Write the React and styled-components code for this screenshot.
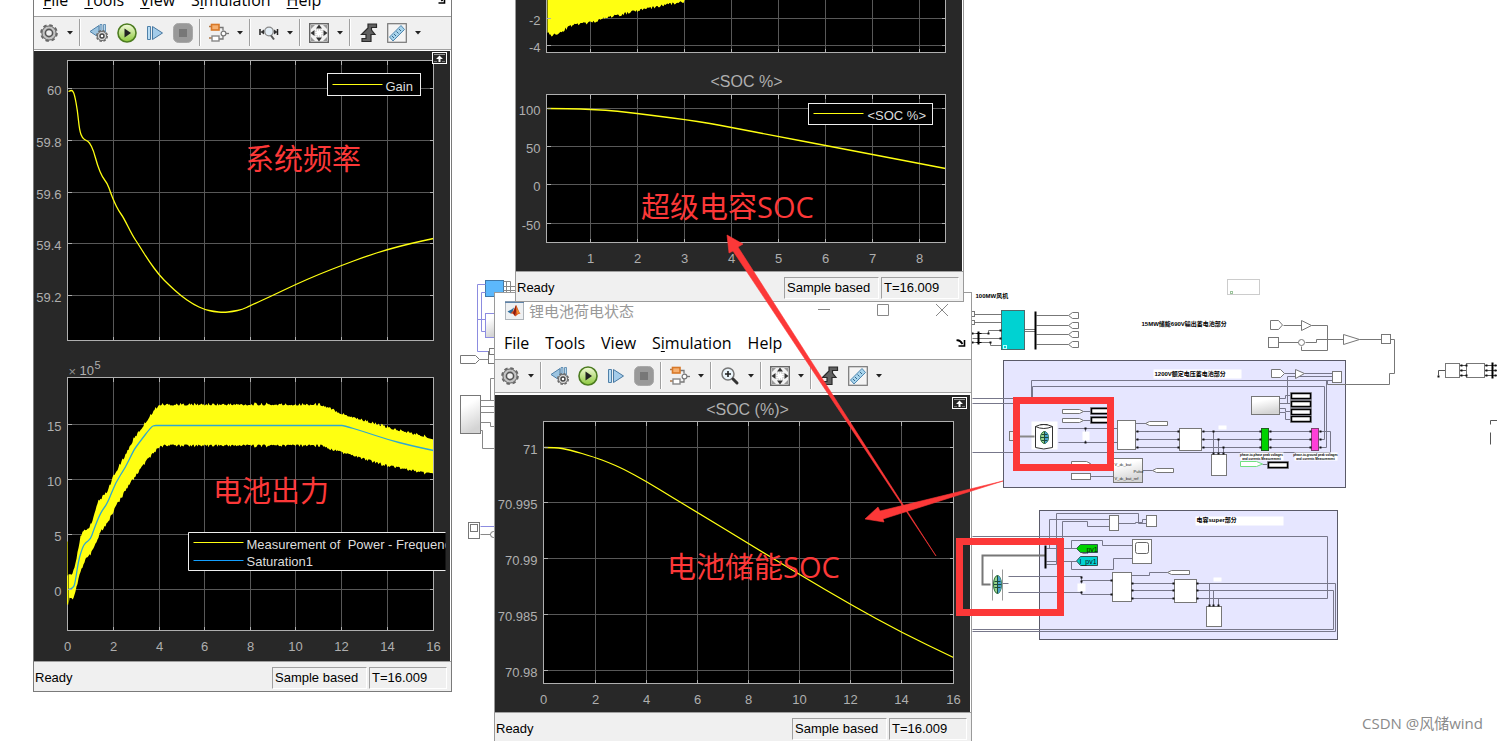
import React from "react";
import styled, { createGlobalStyle } from "styled-components";

const GlobalStyle = createGlobalStyle`
  * {
    box-sizing: border-box;
  }

  body {
    margin: 0;
    background: #fff;
    overflow: hidden;
  }
`;

const Desktop = styled.main`
  position: relative;
  width: 100%;
  height: 100vh;
  overflow: hidden;
  font-family: "Liberation Sans", "Noto Sans CJK SC", sans-serif;
`;

const Canvas = styled.svg`
  position: absolute;
  top: 0;
  left: 0;
  pointer-events: none;
`;

const Window = styled.section`
  position: absolute;
  left: ${(p) => p.$x}px;
  top: ${(p) => p.$y}px;
  width: ${(p) => p.$w}px;
  display: flex;
  flex-direction: column;
  background: #fff;
  border: 1px solid ${(p) => p.$edge || "#9a9a9a"};
`;

const TitleBar = styled.header`
  display: flex;
  align-items: center;
  height: 34px;
  padding-left: 10px;
  color: #999;
  font-size: 15px;
`;

const TitleText = styled.span`
  flex: 1;
  margin-left: 5px;
`;

const CaptionButton = styled.button`
  width: 59px;
  height: 30px;
  padding: 0;
  border: none;
  background: none;
  display: flex;
  align-items: center;
  justify-content: center;
`;

const MenuBar = styled.nav`
  display: flex;
  align-items: center;
  gap: 16px;
  height: 32px;
  padding: 0 5px 0 9px;
`;

const MenuItem = styled.button`
  border: none;
  padding: 0;
  background: none;
  color: #000;
  font-family: "Open Sans", "Noto Sans", sans-serif;
  font-size: 16px;
  line-height: 22px;

  u {
    text-underline-offset: 2px;
  }
`;

const DockButton = styled(MenuItem)`
  display: flex;
  margin-left: auto;
`;

const Toolbar = styled.div`
  display: flex;
  align-items: center;
  height: 34px;
  margin-bottom: ${(p) => p.$gap}px;
  padding-left: 1px;
  padding-bottom: 1px;
  background: #f0f0f0;
  border-top: 1px solid #a0a0a0;
  border-bottom: 1px solid #a0a0a0;
`;

const ToolButton = styled.button`
  display: flex;
  align-items: center;
  justify-content: center;
  width: ${(p) => (p.$narrow ? 14 : 28)}px;
  height: 28px;
  padding: 0;
  border: none;
  background: none;
`;

const Separator = styled.span`
  width: 2px;
  height: 27px;
  margin: 0 4px 0 2px;
  border-left: 1px solid #a0a0a0;
  border-right: 1px solid #fff;
`;

const Scope = styled.svg`
  display: block;
  margin-right: 1px;
  background: #282828;
  font-size: 13px;

  text {
    white-space: pre;
  }
`;

const StatusBar = styled.footer`
  display: flex;
  align-items: center;
  gap: 2px;
  height: 30px;
  padding: 4px 4px 2px 1px;
  background: #f0f0f0;
  border-top: 1px solid #a0a0a0;
  color: #000;
  font-size: 13px;
`;

const StatusText = styled.span`
  flex: 1;
`;

const StatusCell = styled.span`
  width: ${(p) => p.$w}px;
  height: 22px;
  padding-left: 2px;
  line-height: 20px;
  border: 1px solid;
  border-color: #a0a0a0 #fff #fff #a0a0a0;
`;

const Note = styled.span`
  position: absolute;
  left: ${(p) => p.$x}px;
  top: ${(p) => p.$y}px;
  color: #fc3838;
  font-family: "Open Sans", "Noto Sans CJK SC", sans-serif;
  font-size: 29px;
  line-height: 40px;
  white-space: nowrap;
`;

const Watermark = styled.span`
  position: absolute;
  right: 14px;
  bottom: 6px;
  color: #8a8a8a;
  font-family: "Open Sans", "Noto Sans CJK SC", sans-serif;
  font-size: 15px;
  line-height: 24px;
`;

// quadratic smoothing through the midpoints, so the curve never overshoots
const smooth = (pts) => {
  let d = `M${pts[0]}`;
  for (let i = 1; i < pts.length - 1; i++) {
    const [x, y] = pts[i];
    const [nx, ny] = pts[i + 1];
    d += ` Q${x},${y} ${(x + nx) / 2},${(y + ny) / 2}`;
  }
  return `${d} L${pts[pts.length - 1]}`;
};

// resample an edge at every pixel with a bit of fixed noise
const noisy = (pts, dir, amp = 3) => {
  const out = [];
  for (let i = 0; i < pts.length - 1; i++) {
    const [x1, y1] = pts[i];
    const [x2, y2] = pts[i + 1];
    for (let x = x1; x < x2; x += 1) {
      const n = Math.abs(Math.sin(x * 12.9898) * 43758.5453) % 1;
      out.push([x, y1 + ((y2 - y1) * (x - x1)) / (x2 - x1) + dir * n * n * amp]);
    }
  }
  out.push(pts[pts.length - 1]);
  return out;
};

function Axes({ x, y, w, h, xTicks = [], yTicks = [], labelX, labelY, children }) {
  return (
    <g>
      <rect x={x} y={y} width={w} height={h} fill="#000" />
      <g stroke="#585858" shapeRendering="crispEdges">
        {xTicks.map(([px]) => (
          <line key={px} x1={px} x2={px} y1={y} y2={y + h} />
        ))}
        {yTicks.map(([py]) => (
          <line key={py} x1={x} x2={x + w} y1={py} y2={py} />
        ))}
      </g>
      {children}
      <g stroke="#afafaf" shapeRendering="crispEdges">
        <rect x={x} y={y} width={w} height={h} fill="none" />
        {xTicks.map(([px]) => (
          <path key={px} d={`M${px},${y}v4M${px},${y + h}v-4`} />
        ))}
        {yTicks.map(([py]) => (
          <path key={py} d={`M${x},${py}h4M${x + w},${py}h-4`} />
        ))}
      </g>
      <g fill="#afafaf">
        {labelY &&
          xTicks.map(([px, t]) => (
            <text key={px} x={px} y={labelY} textAnchor="middle">
              {t}
            </text>
          ))}
        {yTicks.map(([py, t]) => (
          <text key={py} x={labelX} y={py + 6} textAnchor="end">
            {t}
          </text>
        ))}
      </g>
    </g>
  );
}

function MaximizeMark({ x, y }) {
  return (
    <g transform={`translate(${x} ${y})`}>
      <rect x="0.5" y="0.5" width="14" height="11" fill="#282828" stroke="#fff" />
      <path d="M2 2.5h11" stroke="#999" />
      <path d="M7.5 3.5l3.500 3.500h-2.500v3h-2v-3h-2.500z" fill="#fff" />
      <path d="M2 9.500h3M10 9.500h3" stroke="#777" />
    </g>
  );
}

const GAIN = [
  [68, 91], [70, 90], [72, 90], [74, 94], [77, 110], [79, 130], [82, 138], [86, 140], [89, 142],
  [93, 150], [97, 165], [102, 177], [107, 183], [110, 192], [114, 202], [118, 210], [123, 217],
  [132, 235], [138, 244], [148, 260], [159, 275], [168, 284], [180, 295], [193, 304], [204, 309],
  [213, 311], [223, 312], [232, 311], [242, 309], [250, 305], [270, 296], [295, 284], [318, 274],
  [341, 265], [365, 256], [387, 249], [410, 243], [433, 238],
];

const POWER_TOP = [
  [68, 575], [72, 575], [74, 569], [77, 553], [80, 537], [83, 532], [88, 529], [92, 521], [98, 502],
  [107, 492], [113, 477], [123, 459], [133, 440], [147, 420], [155, 409], [160, 405], [320, 405],
  [341, 414], [387, 428], [433, 439],
];

const POWER_BOTTOM = [
  [68, 604], [69, 596], [72, 597], [75, 590], [80, 570], [85, 557], [90, 553], [93, 546], [100, 530],
  [107, 521], [115, 505], [130, 481], [147, 458], [158, 446], [163, 444], [320, 444], [341, 451],
  [387, 464], [433, 473],
];

const SATURATION = [
  [68, 589], [73, 588], [75, 580], [78, 560], [82, 547], [85, 542], [90, 539], [93, 530], [100, 512],
  [107, 503], [115, 482], [125, 467], [133, 450], [138, 443], [151, 426], [154, 425], [157, 425],
  [340, 425], [343, 425], [363, 431], [387, 439], [410, 445], [433, 450],
];

const CURRENT = [
  [547, 31], [550, 33], [558, 33], [565, 27], [573, 23], [590, 21], [610, 15], [637, 9], [660, 4],
  [684, 0],
];

const CAP_SOC = [
  [547, 108], [570, 108], [590, 109], [610, 110], [637, 113], [660, 116], [684, 119], [710, 123],
  [731, 127], [778, 136], [825, 145], [872, 154], [919, 163], [945, 168],
];

const BAT_SOC = [
  [544, 447], [555, 447], [568, 449], [595, 457], [608, 462], [622, 468], [646, 481], [672, 497],
  [697, 512], [748, 543], [799, 574], [850, 604], [901, 632], [953, 657],
];

const TICKS_16 = [
  [67, 0], [113, 2], [159, 4], [204, 6], [250, 8], [295, 10], [341, 12], [387, 14], [433, 16],
];

const points = (list) => list.map((p) => p.join(",")).join(" ");

function FrequencyScope() {
  return (
    <Scope width="416" height="610" viewBox="33.5 50.5 416 610" role="img" aria-label="Frequency and power">
      <Axes
        x={67}
        y={60}
        w={366}
        h={280}
        xTicks={TICKS_16}
        yTicks={[[88, "60"], [140, "59.8"], [192, "59.6"], [243, "59.4"], [295, "59.2"]]}
        labelX={61}
      >
        <path d={smooth(GAIN)} fill="none" stroke="#ffff11" strokeWidth="1.3" />
      </Axes>
      <rect x="327" y="73" width="93" height="22" fill="#000" stroke="#eee" />
      <line x1="332" x2="382" y1="84" y2="84" stroke="#ffff11" />
      <text x="385" y="90" fill="#ddd">Gain</text>
      <MaximizeMark x={431.5} y={51.5} />

      <Axes
        x={67}
        y={377}
        w={366}
        h={253}
        xTicks={TICKS_16}
        yTicks={[[424, "15"], [479, "10"], [534, "5"], [589, "0"]]}
        labelX={61}
        labelY={650}
      >
        <polygon
          points={points([...noisy(POWER_TOP, -1), ...noisy(POWER_BOTTOM, 1).reverse()])}
          fill="#ffff11"
        />
        <path d={smooth(SATURATION)} fill="none" stroke="#30a8d0" strokeWidth="1.3" />
      </Axes>
      <line x1="67" x2="67" y1="541" y2="575" stroke="#a0a010" />
      <line x1="67" x2="67" y1="575" y2="604" stroke="#ffff11" />
      <g fill="#afafaf">
        <text x="68" y="375" fill="#8f8f8f">×</text>
        <text x="79" y="374">10</text>
        <text x="94" y="368" fontSize="11">5</text>
      </g>
      <path d="M445 532H188V570H445" fill="#000" stroke="#eee" />
      <line x1="193" x2="243" y1="542" y2="542" stroke="#ffff11" />
      <line x1="193" x2="243" y1="560" y2="560" stroke="#139fff" />
      <clipPath id="legendClip">
        <rect x="188" y="532" width="257" height="38" />
      </clipPath>
      <g fill="#ddd" clipPath="url(#legendClip)">
        <text x="246" y="548">{"Measurement of  Power - Frequency"}</text>
        <text x="246" y="565">Saturation1</text>
      </g>
    </Scope>
  );
}

function CapacitorScope() {
  const ticks = [590, 637, 684, 731, 778, 825, 872, 919].map((x, i) => [x, i + 1]);
  return (
    <Scope width="446" height="271" viewBox="515.5 -0.5 446 271" role="img" aria-label="Capacitor SOC">
      <Axes
        x={546}
        y={-10}
        w={399}
        h={62}
        xTicks={ticks}
        yTicks={[[18, "-2"], [45, "-4"]]}
        labelX={540}
      >
        <polygon points={points([[547, -1], ...noisy(CURRENT, 1), [684, -1]])} fill="#ffff11" />
      </Axes>
      <text x="746" y="86" fontSize="16" fill="#afafaf" textAnchor="middle">{"<SOC %>"}</text>
      <Axes
        x={546}
        y={94}
        w={399}
        h={148}
        xTicks={ticks}
        yTicks={[[108, "100"], [146, "50"], [184, "0"], [223, "-50"]]}
        labelX={540}
        labelY={262}
      >
        <path d={smooth(CAP_SOC)} fill="none" stroke="#ffff11" strokeWidth="1.3" />
      </Axes>
      <rect x="808" y="103" width="124" height="21" fill="#000" stroke="#eee" />
      <line x1="813" x2="863" y1="113" y2="113" stroke="#ffff11" />
      <text x="867" y="119" fill="#ddd">{"<SOC %>"}</text>
    </Scope>
  );
}

function BatteryScope() {
  return (
    <Scope width="475" height="317" viewBox="494.5 394.5 475 317" role="img" aria-label="Battery SOC">
      <text x="747" y="414" fontSize="16" fill="#afafaf" textAnchor="middle">{"<SOC (%)>"}</text>
      <Axes
        x={543}
        y={421}
        w={410}
        h={262}
        xTicks={[
          [543, 0], [595, 2], [646, 4], [697, 6], [748, 8], [799, 10], [850, 12], [901, 14], [953, 16],
        ]}
        yTicks={[
          [447, "71"], [502, "70.995"], [558, "70.99"], [614, "70.985"], [670, "70.98"],
        ]}
        labelX={537}
        labelY={703}
      >
        <path d={smooth(BAT_SOC)} fill="none" stroke="#ffff11" strokeWidth="1.3" />
      </Axes>
      <MaximizeMark x={951.5} y={396.5} />
    </Scope>
  );
}

function GearIcon() {
  return (
    <svg width="20" height="20" viewBox="0 0 20 20">
      <circle cx="10" cy="10" r="7.6" fill="#999" stroke="#666" strokeWidth="2.4" strokeDasharray="3.4 2.57" />
      <circle cx="10" cy="10" r="7" fill="#c4c4c4" stroke="#707070" />
      <circle cx="10" cy="10" r="3.6" fill="#f0f0f0" stroke="#555" strokeWidth="1.6" />
    </svg>
  );
}

function StepBackIcon() {
  return (
    <svg width="20" height="20" viewBox="0 0 20 20">
      <path d="M1 8.5L10 2.5v12z" fill="#9cc4e0" stroke="#4f80a8" />
      <path d="M11 1.5h2v12h-2zM14.5 1.5h2v12h-2z" fill="#b8d8ee" stroke="#4f80a8" strokeWidth="0.8" />
      <circle cx="13" cy="13" r="5" fill="#ccc" stroke="#666" strokeWidth="2" strokeDasharray="2.4 1.5" />
      <circle cx="13" cy="13" r="4.6" fill="#d4d4d4" stroke="#707070" />
      <circle cx="13" cy="13" r="2" fill="#fff" stroke="#444" strokeWidth="1.4" />
    </svg>
  );
}

function RunIcon() {
  return (
    <svg width="20" height="20" viewBox="0 0 20 20">
      <defs>
        <linearGradient id="run" x2="0" y2="1">
          <stop offset="0" stopColor="#f4fbdc" />
          <stop offset="1" stopColor="#8cc83c" />
        </linearGradient>
      </defs>
      <circle cx="10" cy="10" r="9" fill="url(#run)" stroke="#4c7c20" strokeWidth="1.6" />
      <path d="M7.5 5.5v9l6.5-4.5z" fill="#222" />
    </svg>
  );
}

function StepIcon() {
  return (
    <svg width="20" height="20" viewBox="0 0 20 20">
      <path d="M2.5 3.5h3v13h-3z" fill="#b8dcf4" stroke="#4f80a8" />
      <path d="M7.5 3.500L17.5 10l-10 6.500z" fill="#a4ccea" stroke="#4878a0" />
    </svg>
  );
}

function StopIcon() {
  return (
    <svg width="20" height="20" viewBox="0 0 20 20">
      <rect x="0.5" y="0.5" width="19" height="19" rx="5" fill="#999" stroke="#a8a8a8" />
      <rect x="6" y="6" width="8" height="8" fill="#777" />
    </svg>
  );
}

function BlocksIcon() {
  return (
    <svg width="20" height="20" viewBox="0 0 20 20" fill="none">
      <path d="M10 4.5h4v3M10 16h4v-3" stroke="#777" strokeWidth="1.3" />
      <path d="M0 3.500h3M0 15h3" stroke="#b07848" strokeWidth="1.3" />
      <rect x="2.5" y="1.5" width="7.5" height="5.500" fill="#f6b070" stroke="#d87828" strokeWidth="1.6" />
      <rect x="3" y="13" width="7" height="5" fill="#fff" stroke="#888" strokeWidth="1.4" />
      <circle cx="14.5" cy="10.5" r="2.4" fill="#fff" stroke="#777" strokeWidth="1.2" />
      <path d="M17 10.5h3" stroke="#777" strokeWidth="1.3" />
    </svg>
  );
}

function ZoomXIcon() {
  return (
    <svg width="20" height="20" viewBox="0 0 20 20" fill="none">
      <path d="M1 6v6M18.5 6v6" stroke="#222" strokeWidth="1.5" />
      <path d="M5 6.500L1.500 9 5 11.500zM15 6.500L18.500 9 15 11.500z" fill="#333" />
      <circle cx="10" cy="8.500" r="4.3" fill="#e4eef6" stroke="#888" strokeWidth="1.3" />
      <path d="M12 12.500l3 4" stroke="#555" strokeWidth="2" />
    </svg>
  );
}

function ZoomInIcon() {
  return (
    <svg width="20" height="20" viewBox="0 0 20 20" fill="none">
      <circle cx="8" cy="8" r="6" fill="#eaf4fa" stroke="#777" strokeWidth="1.5" />
      <path d="M8 5v6M5 8h6" stroke="#222" strokeWidth="1.6" />
      <path d="M13 13l4 4" stroke="#333" strokeWidth="3" strokeLinecap="round" />
    </svg>
  );
}

function FitIcon() {
  return (
    <svg width="20" height="20" viewBox="0 0 20 20">
      <rect x="0.7" y="0.7" width="18.6" height="18.6" fill="#f2f2f2" stroke="#666" strokeWidth="1.4" />
      <path d="M10 1.5l3 4H7zM10 18.5l3-4H7zM1.5 10l4-3v6zM18.5 10l-4-3v6z" fill="#333" />
      <path d="M2 2h4L2 6zM18 2h-4l4 4zM2 18h4l-4-4zM18 18h-4l4-4z" fill="#999" />
      <rect x="7" y="7" width="6" height="6" fill="#fff" stroke="#bbb" strokeDasharray="1 1" />
    </svg>
  );
}

function TriggerIcon() {
  return (
    <svg width="20" height="20" viewBox="0 0 20 20">
      <path
        d="M3 15.500h4V11.500H2.500L9 5V1h8.500v3.500H12.500V7l3.500 4.500h-4V18.500H3z"
        fill="#606060"
        stroke="#2a2a2a"
        strokeWidth="1.2"
      />
    </svg>
  );
}

function MeasureIcon() {
  return (
    <svg width="20" height="20" viewBox="0 0 20 20">
      <rect x="0.7" y="0.7" width="18.6" height="18.6" fill="#f4f4f4" stroke="#777" strokeWidth="1.2" />
      <path d="M2.5 14L14 2.500l3.500 4L6 18z" fill="#a8d4ec" stroke="#5088b0" />
      <path d="M7 11l2 2M9.500 8.500l2 2M12 6l2 2M5 13l2 2" stroke="#34688c" />
    </svg>
  );
}

function Caret() {
  return (
    <svg width="6" height="4" viewBox="0 0 6 4">
      <path d="M0 0h6L3 3.500z" fill="#222" />
    </svg>
  );
}

function DockIcon() {
  return (
    <svg width="10" height="8" viewBox="0 0 10 8">
      <path d="M0.500 1.500c2.500-1 4 .500 6 3.500" fill="none" stroke="#000" strokeWidth="1.800" />
      <path d="M8.500 1v6H2.500" fill="none" stroke="#000" strokeWidth="1.600" />
    </svg>
  );
}

function MatlabIcon() {
  return (
    <svg width="19" height="19" viewBox="0 0 19 19">
      <rect x="0.5" y="0.5" width="18" height="18" fill="#eef0f2" stroke="#aeb4ba" />
      <path d="M0 0.500h19v1.500H0z" fill="#5e82a8" />
      <path d="M2.500 10.500l4-2L9 6.500l-1.500 5.500-2 .500z" fill="#2c6c9c" />
      <path d="M5.500 12.500l3-3 2.500-5.500c1 1 2.500 6 4.500 9-2-.8-2.500.3-5 2.500-1.500-2.500-2.500-3.500-5-3z" fill="#d8501c" />
      <path d="M11 4c.6 2 .500 7-1.500 11L8 12z" fill="#8c1c10" />
      <path d="M11 4.500c1 3 2 6 4.500 8.500-1.500-1.500-2.500-.5-3.500 0z" fill="#f09030" />
    </svg>
  );
}

const MENUS = [["", "F", "ile"], ["", "T", "ools"], ["", "V", "iew"], ["S", "i", "mulation"], ["", "H", "elp"]];

function Menus({ allKeys }) {
  return (
    <MenuBar>
      {MENUS.map(([before, key, after]) => (
        <MenuItem key={after}>
          {before}
          {allKeys || before ? <u>{key}</u> : key}
          {after}
        </MenuItem>
      ))}
      <DockButton aria-label="Dock">
        <DockIcon />
      </DockButton>
    </MenuBar>
  );
}

function Tool({ label, menu, children }) {
  return (
    <>
      <ToolButton aria-label={label}>{children}</ToolButton>
      {menu && (
        <ToolButton $narrow aria-label={`${label} options`}>
          <Caret />
        </ToolButton>
      )}
    </>
  );
}

function Tools({ zoom, gap = 1 }) {
  return (
    <Toolbar $gap={gap}>
      <Tool label="Settings" menu><GearIcon /></Tool>
      <Separator />
      <Tool label="Step back"><StepBackIcon /></Tool>
      <Tool label="Run"><RunIcon /></Tool>
      <Tool label="Step forward"><StepIcon /></Tool>
      <Tool label="Stop"><StopIcon /></Tool>
      <Separator />
      <Tool label="Highlight block" menu><BlocksIcon /></Tool>
      <Separator />
      <Tool label="Zoom" menu>{zoom}</Tool>
      <Separator />
      <Tool label="Fit to view" menu><FitIcon /></Tool>
      <Separator />
      <Tool label="Triggers"><TriggerIcon /></Tool>
      <Tool label="Measurements" menu><MeasureIcon /></Tool>
    </Toolbar>
  );
}

function Status() {
  return (
    <StatusBar>
      <StatusText>Ready</StatusText>
      <StatusCell $w={95}>Sample based</StatusCell>
      <StatusCell $w={78}>T=16.009</StatusCell>
    </StatusBar>
  );
}

const Block = ({ x, y, w, h, fill = "#fff", stroke = "#777" }) => (
  <rect x={x} y={y} width={w} height={h} fill={fill} stroke={stroke} />
);

// tag pointing right (dir 1) or left (dir -1)
const Tag = ({ x, y, w, h, dir = 1, tip = 4, fill = "#fff", stroke = "#777" }) => {
  const d =
    dir === 1
      ? `M${x},${y}h${w - tip}l${tip},${h / 2}l${-tip},${h / 2}h${tip - w}z`
      : `M${x + w},${y}h${tip - w}l${-tip},${h / 2}l${tip},${h / 2}h${w - tip}z`;
  return <path d={d} fill={fill} stroke={stroke} />;
};

const Display = ({ x, y, w = 19 }) => (
  <g>
    <rect x={x - 1} y={y - 1} width={w + 2} height="7" fill="none" stroke="#9a9aa4" />
    <rect x={x} y={y} width={w} height="5" fill="#fff" stroke="#000" strokeWidth="1.5" />
  </g>
);

const Dots = ({ at }) => at.map(([x, y]) => <rect key={`${x}-${y}`} x={x - 1} y={y - 1} width="2" height="2" fill="#111" />);

const Globe = ({ x, y, rx, ry }) => (
  <g>
    <ellipse cx={x} cy={y} rx={rx} ry={ry} fill="#9cd48c" stroke="#246c34" />
    <path d={`M${x},${y - ry}a${rx},${ry} 0 0 1 0,${ry * 2}z`} fill="#4aa0cc" />
    <path
      d={`M${x - rx},${y}h${rx * 2}M${x},${y - ry}v${ry * 2}M${x - rx + 1},${y - 3}h${rx * 2 - 2}M${x - rx + 1},${y + 3}h${rx * 2 - 2}`}
      stroke="#1c4c3c"
      fill="none"
    />
  </g>
);

function Diagram() {
  return (
    <Canvas width="1497" height="741" viewBox="-0.5 -0.5 1497 741" fill="none" role="img" aria-label="Model diagram">
      <defs>
        <linearGradient id="shade" x2="0.3" y2="1">
          <stop offset="0.3" stopColor="#fff" />
          <stop offset="1" stopColor="#d4d4d4" />
        </linearGradient>
      </defs>

      {/* blocks left of the battery window */}
      <Block x={485} y={280} w={18} h={16} fill="#5cb8fc" stroke="#4078a8" />
      <path d="M485 284H477V351H494M485 292H481V331H485M477 319H485M480 526H494" stroke="#8c8ce0" />
      <Block x={485} y={313} w={12} h={24} fill="url(#shade)" stroke="#8c8ce0" />
      <path d="M503 286H516M503 290H516M503 281H510V292M506 281V292M479 359H488" stroke="#888" />
      <Tag x={460} y={355} w={19} h={8} />
      <Block x={488} y={351} w={9} h={12} />
      <Block x={489} y={348} w={9} h={6} />
      <Block x={460} y={395} w={20} h={38} fill="url(#shade)" />
      <path d="M494 378H490V400M480 400H494M480 406H494M480 412H494M480 422H490V426H494M480 430H482V448H494M480 534H490" stroke="#888" />
      <Block x={468} y={522} w={11} h={16} />
      <Block x={470} y={524} w={7} h={7} />
      <circle cx="493" cy="534" r="3" stroke="#777" />

      {/* wind farm */}
      <g fill="#000" fontSize="6" fontWeight="700">
        <text x="975" y="297">100MW风机</text>
        <text x="1141" y="325">15MW储能690V输出蓄电池部分</text>
      </g>
      <path d="M974 314H1001M974 322H1001M972 333H988V330H1001M972 338H1001M972 342H990V345H1001" stroke="#777" />
      <path d="M1036 315H1068M1036 325H1068M1036 334H1068M1036 344H1068M1024 329H1035M1024 331H1035" stroke="#777" />
      <Block x={971} y={311} w={3} h={5} />
      <Block x={971} y={320} w={3} h={4} />
      <path d="M978 331V344" stroke="#000" strokeWidth="2" />
      <path d="M976 333h5M976 342h5" stroke="#000" />
      <Block x={1001} y={310} w={23} h={39} fill="#00d2d2" stroke="#4c6c6c" />
      <rect x="1003" y="345" width="3" height="3" stroke="#bff" />
      <path d="M1035 311V349" stroke="#000" strokeWidth="2" />
      {[312, 322, 331, 341].map((y) => (
        <Tag key={y} x={1068} y={y} w={10} h={6} dir={-1} />
      ))}
      <Dots at={[[1000, 330], [1000, 338], [988, 333], [990, 342], [972, 333], [972, 342]]} />

      <Block x={1227} y={279} w={32} h={15} stroke="#ccc" />
      <rect x="1230" y="291" width="2" height="2" stroke="#9cc49c" />

      {/* control chain at the top right */}
      <path
        d="M1283 325H1301M1311 325H1327V350H1301V346M1278 342H1298M1305 342H1316V339H1343M1359 339H1381M1390 339H1394V373H1389V384H1327V380"
        stroke="#777"
      />
      <Tag x={1270} y={320} w={12} h={9} />
      <Block x={1268} y={337} w={10} h={10} />
      <path d="M1301 320l10 5-10 5zM1343 334l16 5-16 5z" fill="#fff" stroke="#777" />
      <circle cx="1301" cy="342" r="3" fill="#fff" stroke="#777" />
      <Block x={1381} y={334} w={9} h={9} />

      <path d="M1445 370H1438V375M1459 365H1466M1459 370H1466M1459 375H1466M1484 365H1497M1484 370H1497M1484 375H1497M1497 420H1490V424M1490 432V444" stroke="#555" />
      <Block x={1445} y={363} w={14} h={14} />
      <Block x={1466} y={363} w={18} h={14} />
      <path d="M1492 362V378" stroke="#000" strokeWidth="2" />
      <Dots at={[[1438, 376], [1461, 365], [1461, 370], [1461, 375], [1486, 365], [1486, 370], [1486, 375], [1466, 365], [1466, 375], [1495, 365], [1495, 370], [1495, 375]]} />

      {/* battery subsystem */}
      <Block x={1003} y={360} w={342} h={127} fill="#e6e6ff" stroke="#5a5a68" />
      <path d="M1346 384H1327" stroke="#777" />
      <path
        d="M972 398H1031M972 403H1031M972 452H1330V431H1319M1031 398V380H1332M1032 398V386H1324V439H1319M1326 380V447H1319M1327 380V384M1284 373H1295M1304 373H1332M1332 376H1287V403
           M1279 398H1285V395H1290M1279 403H1290M1279 408H1285V411H1290M1279 412H1285V419H1290
           M1135 431H1179M1135 439H1179M1135 447H1179M1201 431H1310M1201 439H1310M1201 447H1310
           M1213 431V454M1218 439V454M1223 447V454M1135 423H1146M1142 470H1152M1090 476H1113
           M1058 428H1117M1058 442H1117M1085 428V442M1083 411H1091M1083 420H1091M1262 464H1267"
        stroke="#77778a"
      />
      <rect x="1153" y="369" width="88" height="9" fill="#fff" />
      <text x="1154" y="375" fontSize="6" fontWeight="700" fill="#000">1200V额定电压蓄电池部分</text>
      <Tag x={1271} y={369} w={13} h={8} />
      <path d="M1295 369l9 4-9 5z" fill="#fff" stroke="#777" />
      <Block x={1332} y={371} w={9} h={11} />
      <Block x={1251} y={396} w={28} h={18} fill="url(#shade)" />
      {[393, 401, 409, 416].map((y) => (
        <Display key={y} x={1291} y={y} />
      ))}
      <Block x={1117} y={420} w={18} h={29} />
      <Block x={1179} y={428} w={22} h={22} />
      <Block x={1211} y={454} w={15} h={21} />
      <Block x={1261} y={428} w={7} h={22} fill="#00d200" stroke="#206020" />
      <Block x={1311} y={428} w={7} h={22} fill="#ff40d8" stroke="#804070" />
      <rect x="1218" y="425" width="8" height="4" fill="#fff" />
      <Tag x={1145} y={421} w={22} h={4} dir={-1} />
      <Tag x={1152} y={468} w={21} h={4} dir={-1} />
      <Block x={1113} y={458} w={29} h={24} fill="url(#shade)" />
      <g fill="#222" fontSize="4">
        <text x="1114" y="465">V_dc_bat</text>
        <text x="1114" y="479">V_dc_bat_ref</text>
        <text x="1133" y="472">Pulse</text>
      </g>
      <Block x={1071} y={473} w={19} h={6} />
      <Tag x={1071} y={461} w={19} h={4} />
      <Tag x={1240} y={461} w={22} h={5} tip={6} stroke="#70e080" />
      <Display x={1268} y={462} />
      <rect x="1240" y="452" width="43" height="8" fill="#fff" />
      <rect x="1294" y="452" width="43" height="8" fill="#fff" />
      <g fill="#000" fontSize="3" fontWeight="700" textAnchor="middle">
        <text x="1261" y="455">phase-to-phase peak voltages</text>
        <text x="1261" y="459">and currents Measurement</text>
        <text x="1315" y="455">phase-to-ground peak voltages</text>
        <text x="1315" y="459">and currents Measurement</text>
      </g>
      <Dots
        at={[431, 439, 447].flatMap((y) => [
          [1137, y], [1178, y], [1203, y], [1260, y], [1270, y], [1310, y], [1320, y],
        ])}
      />
      <Dots at={[[1213, 431], [1218, 439], [1223, 447], [1085, 428], [1085, 442], [1213, 453], [1218, 453], [1223, 453]]} />
      <Tag x={1062} y={409} w={21} h={4} />
      <Tag x={1062} y={418} w={21} h={4} />
      <Display x={1091} y={408} />
      <Display x={1091} y={417} />
      <rect x="1082" y="431" width="7" height="9" fill="#fff" />
      <rect x="1031" y="421" width="26" height="28" fill="#fff" />
      <Block x={1009} y={431} w={10} h={9} fill="#eee" />
      <path d="M1019 436H1034" stroke="#888" strokeWidth="2" />
      <path d="M1035 426V447Q1043 450 1052 447V426Q1043 422 1035 426Q1043 430 1052 426M1040 424h7" stroke="#333" />
      <Globe x={1044} y={437} rx={4} ry={6} />

      {/* super capacitor subsystem */}
      <Block x={1039} y={510} w={298} h={129} fill="#e6e6ff" stroke="#5a5a68" />
      <path
        d="M972 536H1327V598H1197M972 629H1333V590H1197M972 631H1335V583H1197
           M1049 548V519H1109M1056 564V513H1138V523H1146M1062 561V521H1087V526H1109M1118 523H1135V522H1142V519H1146
           M1046 548H1076M1046 561H1076M1046 564H1056M1071 548V540H1102V545H1132M1071 561V569H1113V558H1132
           M1002 583H1008M1008 576H1081V594H1112M1008 592H1081M1081 580H1112M1131 575H1149V572H1167
           M1131 583H1174M1131 590H1174M1131 598H1174M1209 583V606M1213 590V606M1218 598V606"
        stroke="#77778a"
      />
      <path d="M1045 555H982V584H990" stroke="#777" strokeWidth="2" />
      <path d="M992 569V600M1002 569V600" stroke="#999" />
      <Globe x={997} y={584} rx={4} ry={9} />
      <path d="M1045 545V568" stroke="#000" strokeWidth="2" />
      <rect x="1195" y="516" width="88" height="9" fill="#fff" />
      <text x="1196" y="521" fontSize="6" fontWeight="700" fill="#000">电容super部分</text>
      <Block x={1109} y={515} w={9} h={15} />
      <Block x={1146} y={515} w={10} h={11} />
      <Tag x={1076} y={544} w={21} h={8} dir={-1} fill="#00d200" stroke="#355" />
      <Tag x={1076} y={556} w={21} h={9} dir={-1} fill="#00d2d2" stroke="#355" />
      <g fill="#111" fontSize="7">
        <text x="1082" y="551">_pv1</text>
        <text x="1079" y="563">I_pv1</text>
      </g>
      <Block x={1132} y={539} w={19} h={24} />
      <rect x="1135" y="542" width="13" height="11" rx="2" stroke="#666" />
      <Block x={1112} y={572} w={19} h={29} />
      <Block x={1174} y={579} w={22} h={23} />
      <Block x={1206} y={606} w={15} h={20} />
      <Tag x={1167} y={570} w={22} h={4} dir={-1} />
      <rect x="1213" y="577" width="8" height="4" fill="#fff" />
      <rect x="1077" y="583" width="8" height="8" fill="#fff" />
      <Dots at={[583, 590, 598].flatMap((y) => [[1132, y], [1173, y], [1197, y]])} />
      <Dots at={[[1209, 605], [1213, 605], [1218, 605], [1081, 577], [1081, 581], [1081, 592], [1111, 580], [1111, 594]]} />
    </Canvas>
  );
}

function Marks() {
  return (
    <Canvas width="1497" height="741" fill="#fc3838" stroke="#fc3838" aria-hidden="true">
      <rect x="1016.5" y="400.5" width="94" height="67" fill="none" strokeWidth="7" />
      <rect x="959.5" y="541.5" width="101" height="71" fill="none" strokeWidth="7" />
      <g strokeWidth="0.6">
        <path d="M727 235L743 244 738 247 936 556 733 251 729 253z" />
        <path d="M865 519L878 507 880 511 1003 481 883 519 884 522z" />
      </g>
    </Canvas>
  );
}

export default function App() {
  return (
    <Desktop>
      <GlobalStyle />
      <Diagram />

      <Window $x={33} $y={-17} $w={419} $edge="#7a7a7a">
        <Menus allKeys />
        <Tools zoom={<ZoomXIcon />} />
        <FrequencyScope />
        <Status />
      </Window>

      <Window $x={494} $y={292} $w={478}>
        <TitleBar>
          <MatlabIcon />
          <TitleText>锂电池荷电状态</TitleText>
          <CaptionButton aria-label="Minimize">
            <svg width="12" height="12"><path d="M0 5.500h12" stroke="#888" /></svg>
          </CaptionButton>
          <CaptionButton aria-label="Maximize">
            <svg width="12" height="12"><path d="M0.500 0.500h11v11h-11z" fill="none" stroke="#888" /></svg>
          </CaptionButton>
          <CaptionButton aria-label="Close">
            <svg width="12" height="12"><path d="M0 0l12 12M12 0L0 12" stroke="#888" /></svg>
          </CaptionButton>
        </TitleBar>
        <Menus />
        <Tools zoom={<ZoomInIcon />} gap={2} />
        <BatteryScope />
        <Status />
      </Window>

      <Window $x={515} $y={-1} $w={449}>
        <CapacitorScope />
        <Status />
      </Window>

      <Marks />
      <Note $x={245} $y={139}>系统频率</Note>
      <Note $x={213} $y={471}>电池出力</Note>
      <Note $x={641} $y={187}>超级电容SOC</Note>
      <Note $x={667} $y={547}>电池储能SOC</Note>
      <Watermark>CSDN @风储wind</Watermark>
    </Desktop>
  );
}
